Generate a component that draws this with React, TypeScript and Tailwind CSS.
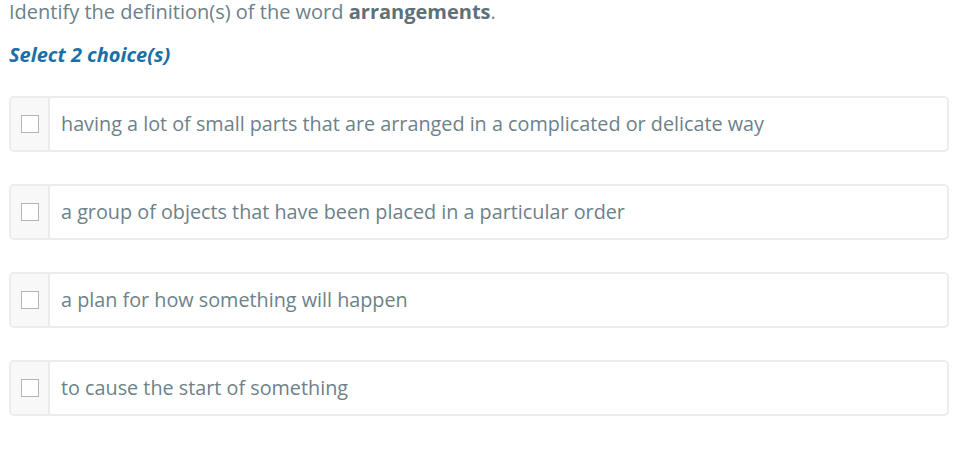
const choices = [
  "having a lot of small parts that are arranged in a complicated or delicate way",
  "a group of objects that have been placed in a particular order",
  "a plan for how something will happen",
  "to cause the start of something",
];

function Choice({ text }: { text: string }) {
  return (
    <label className="flex h-[56px] overflow-hidden rounded-[5px] border-2 border-[#ececec] bg-white">
      <span className="flex w-[39px] shrink-0 items-center justify-center border-r-2 border-[#ececec] bg-[#f8f8f8]">
        <span className="h-[18px] w-[18px] border border-[#b5b5b5] bg-white" />
      </span>
      <span className="flex items-center pl-[11px] text-[19.8px] text-[#6d8189]">
        {text}
      </span>
    </label>
  );
}

export default function App() {
  return (
    <div
      className="h-[456px] w-[978px] bg-white pl-[9px] pr-[29px]"
      style={{ fontFamily: '"Open Sans", sans-serif' }}
    >
      <p className="text-[20px] leading-[24px] text-[#6d8189]">
        Identify the definition(s) of the word{" "}
        <b className="font-bold text-[#5e7078]">arrangements</b>.
      </p>
      <p className="mt-[17px] text-[20px] font-bold italic leading-[28px] text-[#1b6fa6]">
        Select 2 choice(s)
      </p>
      <div className="mt-[27px] flex flex-col gap-[32px]">
        {choices.map((c) => (
          <Choice key={c} text={c} />
        ))}
      </div>
    </div>
  );
}
